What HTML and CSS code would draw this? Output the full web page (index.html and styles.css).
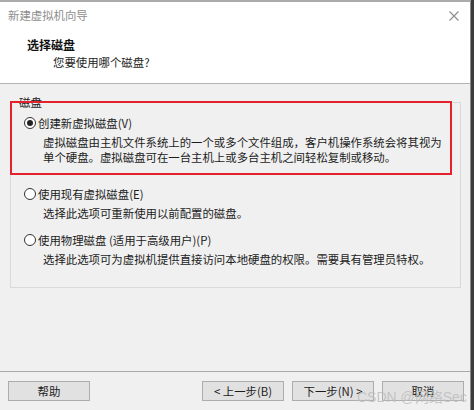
FILE: index.html
```html
<!DOCTYPE html>
<html lang="zh-CN">
<head>
<meta charset="utf-8">
<title>新建虚拟机向导</title>
<link rel="stylesheet" href="styles.css">
</head>
<body>
<div class="window">
  <header class="header">
    <div class="titlebar">
      <span class="title">新建虚拟机向导</span>
      <svg class="close" width="10" height="10" viewBox="0 0 10 10"><path d="M0.5 0.5 L9.5 9.5 M9.5 0.5 L0.5 9.5" stroke="#8c8c8c" stroke-width="1.1" fill="none"/></svg>
    </div>
    <div class="heading">选择磁盘</div>
    <div class="subheading">您要使用哪个磁盘?</div>
  </header>

  <main class="main">
    <fieldset class="group">
      <legend class="legend">磁盘</legend>
      <div class="option first">
        <div class="row"><span class="radio checked"></span><span>创建新虚拟磁盘(V)</span></div>
        <div class="desc">虚拟磁盘由主机文件系统上的一个或多个文件组成，客户机操作系统会将其视为<br>单个硬盘。虚拟磁盘可在一台主机上或多台主机之间轻松复制或移动。</div>
      </div>
      <div class="option second">
        <div class="row"><span class="radio"></span><span>使用现有虚拟磁盘(E)</span></div>
        <div class="desc">选择此选项可重新使用以前配置的磁盘。</div>
      </div>
      <div class="option third">
        <div class="row"><span class="radio"></span><span>使用物理磁盘 (适用于高级用户)(P)</span></div>
        <div class="desc">选择此选项可为虚拟机提供直接访问本地硬盘的权限。需要具有管理员特权。</div>
      </div>
    </fieldset>
  </main>

  <footer class="footer">
    <button class="btn">帮助</button>
    <div class="btn-group">
      <button class="btn">&lt; 上一步(B)</button>
      <button class="btn">下一步(N) &gt;</button>
      <button class="btn">取消</button>
    </div>
  </footer>

  <div class="highlight"></div>
  <div class="watermark">CSDN @网络Sec</div>
</div>
</body>
</html>
```

FILE: styles.css
```css
html, body {
  margin: 0;
  padding: 0;
}
body {
  width: 474px;
  height: 410px;
  background: #3c3c3c;
  overflow: hidden;
  font-family: "Noto Sans CJK SC", "Noto Sans", sans-serif;
  font-size: 11.4px;
  color: #1c1c1c;
}
.window {
  position: relative;
  width: 471px;
  height: 410px;
  box-sizing: border-box;
  border-top: 2px solid #ababab;
  border-right: 1px solid #8a8a8a;
  background: #f0f0f0;
  display: flex;
  flex-direction: column;
}
.header {
  height: 82px;
  box-sizing: border-box;
  background: #ffffff;
  border-bottom: 1px solid #b4b4b4;
  padding-top: 6px;
}
.titlebar {
  display: flex;
  justify-content: space-between;
  align-items: center;
  height: 15px;
  padding: 0 11px 0 8px;
}
.title {
  color: #8e8e8e;
  line-height: 15px;
}
.close {
  display: block;
  margin-top: 1px;
}
.heading {
  margin-top: 14px;
  padding-left: 27px;
  font-weight: bold;
  font-size: 12px;
  line-height: 16px;
  color: #111;
}
.subheading {
  margin-top: 2px;
  padding-left: 53px;
  line-height: 15px;
}
.main {
  flex: 1;
  padding: 11px 0 0 10px;
}
.group {
  margin: 0;
  width: 451px;
  height: 193px;
  box-sizing: border-box;
  border: 1px solid #d9d9d9;
  padding: 0;
}
.legend {
  margin-left: 7px;
  padding: 0 1px;
  line-height: 15px;
}
.option {
  padding-left: 13px;
}
.option.first {
  padding-top: 5px;
}
.option.second {
  margin-top: 21px;
}
.option.third {
  margin-top: 11px;
}
.row {
  display: flex;
  align-items: center;
  height: 16px;
  line-height: 16px;
}
.radio {
  width: 12px;
  height: 12px;
  box-sizing: border-box;
  border: 1px solid #333;
  border-radius: 50%;
  background: #fff;
  margin-right: 2px;
  display: flex;
  align-items: center;
  justify-content: center;
  flex: none;
}
.radio.checked::after {
  content: "";
  width: 6px;
  height: 6px;
  border-radius: 50%;
  background: #222;
}
.desc {
  margin-top: 4px;
  padding-left: 19px;
  line-height: 15px;
}
.footer {
  height: 39px;
  box-sizing: border-box;
  border-top: 1px solid #a9a9a9;
  padding: 9px 6px 9px 8px;
  display: flex;
  justify-content: space-between;
}
.btn-group {
  display: flex;
  gap: 8px;
}
.btn {
  width: 82px;
  height: 20px;
  box-sizing: border-box;
  margin: 0;
  padding: 0;
  border: 1px solid #adadad;
  background: #e1e1e1;
  font-family: "Noto Sans CJK SC", "Noto Sans", sans-serif;
  font-size: 11.4px;
  line-height: 18px;
  color: #1c1c1c;
}
.highlight {
  position: absolute;
  left: 10px;
  top: 99px;
  width: 442px;
  height: 74px;
  box-sizing: border-box;
  border: 2px solid #e2222c;
}
.watermark {
  position: absolute;
  left: 357px;
  top: 386px;
  font-family: "Liberation Sans", sans-serif;
  font-size: 14px;
  line-height: 18px;
  color: rgba(190, 190, 190, 0.85);
  pointer-events: none;
}
```
